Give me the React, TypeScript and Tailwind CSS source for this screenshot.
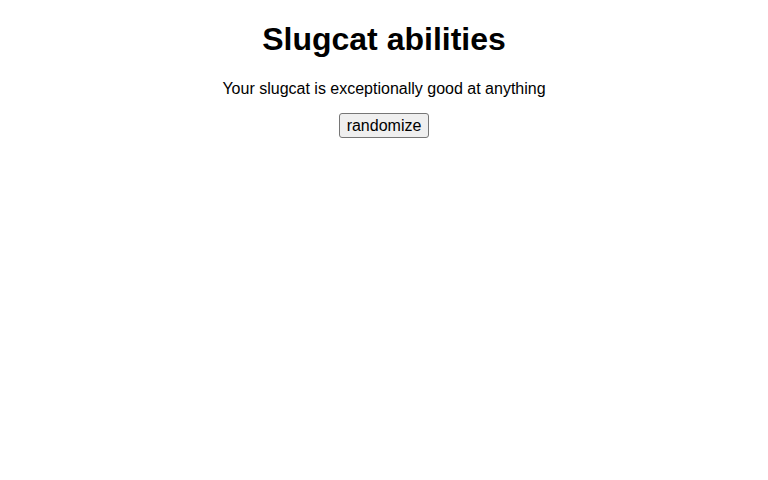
import React, { useState } from 'react';

const abilities = [
  'anything',
  'swimming',
  'climbing poles',
  'throwing spears',
  'eating batflies',
  'hiding from lizards',
];

export default function App() {
  const [ability, setAbility] = useState(abilities[0]);

  const randomize = () => {
    setAbility(abilities[Math.floor(Math.random() * abilities.length)]);
  };

  return (
    <div className="min-h-screen bg-white text-black text-center font-['Liberation_Sans',Arial,sans-serif]">
      <h1 className="pt-[21px] text-[32px] leading-[37px] font-bold">Slugcat abilities</h1>
      <p className="mt-[22px] text-[16px] leading-[18px]">
        Your slugcat is exceptionally good at {ability}
      </p>
      <div className="mt-[15px]">
        <button
          onClick={randomize}
          className="h-[25px] px-[7px] text-[16px] leading-[18px] bg-[#efefef] border border-[#767676] rounded-[3px] hover:bg-[#e5e5e5]"
        >
          randomize
        </button>
      </div>
    </div>
  );
}
